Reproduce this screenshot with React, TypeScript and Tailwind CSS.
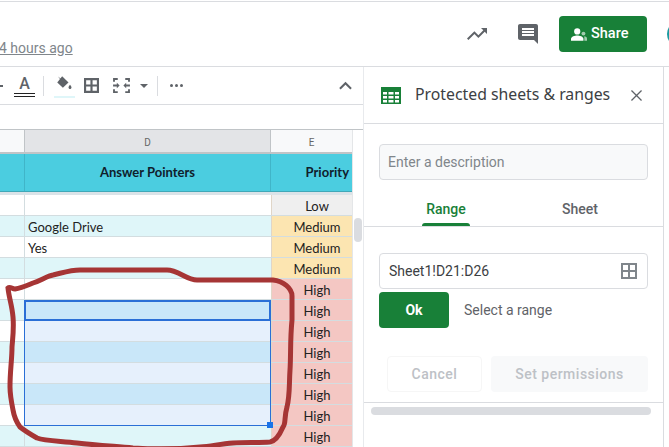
import React from 'react';

const CYAN = 'bg-[#dff6f9]';
const WHITE = 'bg-white';
const LIGHT = 'bg-[#e6f0fc]';
const SKY = 'bg-[#c9e7f9]';

const rows = [
  { left: WHITE, bg: WHITE, text: '', pri: 'Low', priBg: 'bg-[#efefef]' },
  { left: CYAN, bg: CYAN, text: 'Google Drive', pri: 'Medium', priBg: 'bg-[#fce5b1]' },
  { left: WHITE, bg: WHITE, text: 'Yes', pri: 'Medium', priBg: 'bg-[#fce5b1]' },
  { left: CYAN, bg: CYAN, text: '', pri: 'Medium', priBg: 'bg-[#fce5b1]' },
  { left: WHITE, bg: WHITE, text: '', pri: 'High', priBg: 'bg-[#f4c7c3]' },
  { left: CYAN, bg: SKY, text: '', pri: 'High', priBg: 'bg-[#f4c7c3]' },
  { left: WHITE, bg: LIGHT, text: '', pri: 'High', priBg: 'bg-[#f4c7c3]' },
  { left: CYAN, bg: SKY, text: '', pri: 'High', priBg: 'bg-[#f4c7c3]' },
  { left: WHITE, bg: LIGHT, text: '', pri: 'High', priBg: 'bg-[#f4c7c3]' },
  { left: CYAN, bg: SKY, text: '', pri: 'High', priBg: 'bg-[#f4c7c3]' },
  { left: WHITE, bg: LIGHT, text: '', pri: 'High', priBg: 'bg-[#f4c7c3]' },
  { left: CYAN, bg: CYAN, text: '', pri: 'High', priBg: 'bg-[#f4c7c3]' },
];

function Icon({ d, className }: { d: string; className?: string }) {
  return (
    <svg viewBox="0 0 24 24" className={className} fill="currentColor">
      <path d={d} />
    </svg>
  );
}

function Toolbar() {
  return (
    <div className="h-[38px] flex items-center border-b border-[#dadce0] text-[#5f6368] shrink-0">
      <div className="w-[3px] h-[2px] bg-[#5f6368] mt-[1px]" />
      <div className="ml-[11px] w-[21px] flex flex-col items-center pt-[2px]">
        <span className="font-['Roboto',sans-serif] font-medium text-[16px] leading-[16px] text-[#5f6368]">A</span>
        <div className="w-[21px] h-[4px] mt-[1px] border-y border-[#222]" />
      </div>
      <div className="ml-[8px] w-px h-[20px] bg-[#dadce0]" />
      <div className="ml-[9px] w-[22px] flex flex-col items-center pt-[2px]">
        <svg viewBox="0 0 24 24" className="w-[18px] h-[18px]" fill="currentColor">
          <path d="M9.500 1.500 L18 10 L10.500 17 L3 10 Z" />
          <path d="M4 2l5 4-1 1z" />
          <path d="M20 13s-2 2.200-2 3.600c0 1.100.9 2 2 2s2-.9 2-2C22 15.200 20 13 20 13z" />
        </svg>
        <div className="w-[21px] h-[2px] mt-[3px] bg-[#dff6f9]" />
      </div>
      <svg viewBox="0 0 14 14" className="ml-[9px] w-[15px] h-[15px]" fill="none" stroke="currentColor" strokeWidth="2">
        <path d="M1 1h12v12H1zM7 1v12M1 7h12" />
      </svg>
      <svg viewBox="0 0 18 16" className="ml-[14px] w-[17px] h-[15px]" fill="currentColor">
        <path d="M0 0h5v2H2v2H0zM13 0h5v4h-2V2h-3zM0 12h2v2h3v2H0zM16 12h2v4h-5v-2h3zM0 7h4V5l3 3-3 3V9H0zM18 7h-4V5l-3 3 3 3V9h4z" />
      </svg>
      <div className="ml-[10px] w-0 h-0 border-x-[4px] border-x-transparent border-t-[4px] border-t-[#5f6368]" />
      <div className="ml-[9px] w-px h-[20px] bg-[#dadce0]" />
      <div className="ml-[12px] flex gap-[2px]">
        <div className="w-[3px] h-[3px] rounded-full bg-[#5f6368]" />
        <div className="w-[3px] h-[3px] rounded-full bg-[#5f6368]" />
        <div className="w-[3px] h-[3px] rounded-full bg-[#5f6368]" />
      </div>
      <svg viewBox="0 0 14 9" className="ml-auto mr-[11px] w-[13px] h-[9px]" fill="none" stroke="#5f6368" strokeWidth="2.2">
        <path d="M1 8l6-6 6 6" />
      </svg>
    </div>
  );
}

function Grid() {
  return (
    <div className="flex flex-1 min-h-0 font-['Lato',sans-serif] text-[13px] text-[#222]">
      <div className="w-[352px] relative">
        <div className="grid grid-cols-[25px_246px_81px] h-[24px] border-b-2 border-[#c0c4c7] font-['Roboto',sans-serif] text-[10px] text-[#666]">
          <div className="bg-[#f8f9fa] border-r border-[#c0c4c7]" />
          <div className="bg-[#e3e4e7] border-r border-[#c0c4c7] flex items-center justify-center pt-[2px]">D</div>
          <div className="bg-[#f8f9fa] flex items-center justify-center pt-[2px]">E</div>
        </div>
        <div className="grid grid-cols-[25px_246px_81px] h-[37px] bg-[#4bcde0] font-bold text-[#10202c]">
          <div className="border-r border-[#40b5c8]" />
          <div className="border-r border-[#40b5c8] flex items-center justify-center">Answer Pointers</div>
          <div className="flex items-center justify-end pr-[3px]">Priority</div>
        </div>
        <div className="h-[4px] bg-[#dbe3e8] border-t border-[#40a8b8]" />
        <div className="relative">
          {rows.map((r, i) => (
            <div key={i} className="grid grid-cols-[25px_246px_81px] h-[21px] border-b border-[#d3dde0] leading-[16px]">
              <div className={`${r.left} border-r border-[#d3dde0]`} />
              <div className={`${r.bg} px-[3px] pt-[2px] flex items-center`}>{r.text}</div>
              <div className={`${r.priBg} border-l border-[#e0d6c8] flex items-center justify-center pl-[10px] pt-[2px]`}>
                {r.pri}
              </div>
            </div>
          ))}
          <div className="absolute left-[24px] top-[105px] w-[247px] h-[126px] border border-[#2a6fd6]" />
          <div className="absolute left-[24px] top-[105px] w-[247px] h-[21px] border-2 border-[#2a6fd6]" />
          <div className="absolute left-[267px] top-[227px] w-[6px] h-[6px] bg-[#1a73e8]" />
        </div>
      </div>
      <div className="w-[11px] border-l border-[#e4e6e8] bg-white">
        <div className="mt-[88px] mx-auto w-[8px] h-[24px] rounded bg-[#dadce0]" />
      </div>
    </div>
  );
}

function Panel() {
  return (
    <div className="w-[301px] border-l border-l-[#e8eaed] border-r border-r-[#dadce0] flex flex-col font-['Roboto',sans-serif] bg-white">
      <div className="h-[57px] flex items-center border-b border-[#dadce0] shrink-0">
        <svg viewBox="0 0 20 17" className="ml-[17px] w-[20px] h-[17px]" fill="#188038">
          <path d="M0 0h20v17H0z M2 5v2.500h4V5z M7.500 5v2.500h5V5z M14 5v2.500h4V5z M2 9v2.500h4V9z M7.500 9v2.500h5V9z M14 9v2.500h4V9z M2 13v2.500h4V13z M7.500 13v2.500h5V13z M14 13v2.500h4V13z" fillRule="evenodd" />
        </svg>
        <span className="ml-[14px] font-['Noto_Sans',sans-serif] text-[15.8px] text-[#3c4043] whitespace-nowrap">Protected sheets &amp; ranges</span>
        <svg viewBox="0 0 12 12" className="ml-auto mr-[21px] w-[11px] h-[11px]" fill="none" stroke="#5f6368" strokeWidth="1.4">
          <path d="M.5.5l11 11M11.500.5l-11 11" />
        </svg>
      </div>
      <div className="px-[15px] pt-[20px]">
        <div className="h-[36px] w-[269px] border border-[#dadce0] rounded bg-[#f8f9fa] flex items-center px-[8px] text-[14px] text-[#80868b]">
          Enter a description
        </div>
      </div>
      <div className="mt-[17px] h-[30px] border-b border-[#dadce0] flex text-[14px] font-medium shrink-0">
        <div className="ml-[58px] w-[48px] flex flex-col items-center">
          <span className="text-[#188038] leading-[25px]">Range</span>
          <div className="w-[48px] h-[3px] rounded-t bg-[#188038] mt-[1px]" />
        </div>
        <span className="ml-[92px] text-[#5f6368] leading-[25px]">Sheet</span>
      </div>
      <div className="px-[15px] pt-[26px]">
        <div className="h-[36px] w-[269px] border border-[#dadce0] rounded flex items-center pl-[9px] pr-[10px] text-[14px] text-[#3c4043]">
          Sheet1!D21:D26
          <svg viewBox="0 0 16 16" className="ml-auto w-[16px] h-[16px]" fill="none" stroke="#80868b" strokeWidth="2">
            <path d="M1 1h14v14H1zM8 1v14M1 8h14" />
          </svg>
        </div>
        <div className="mt-[3px] flex items-center">
          <div className="w-[70px] h-[36px] rounded bg-[#188038] text-white text-[14px] font-bold flex items-center justify-center">Ok</div>
          <span className="ml-[15px] text-[14px] text-[#5f6368]">Select a range</span>
        </div>
        <div className="mt-[28px] flex text-[14px] font-medium text-[#bdc1c6] tracking-[0.5px]">
          <div className="ml-[8px] w-[95px] h-[36px] border border-[#f6f6f6] rounded flex items-center justify-center">Cancel</div>
          <div className="ml-[9px] w-[157px] h-[36px] bg-[#f8f9fa] rounded flex items-center justify-center">Set permissions</div>
        </div>
      </div>
      <div className="mt-[10px] h-[14px] border-t border-[#dadce0] px-[7px] pt-[4px]">
        <div className="w-[280px] h-[8px] rounded bg-[#dadce0]" />
      </div>
    </div>
  );
}

export default function App() {
  return (
    <div className="relative w-[669px] h-[447px] overflow-hidden bg-white flex flex-col">
      <div className="h-[66px] mt-[1px] border-t border-b border-[#dadce0] flex items-center shrink-0">
        <span className="self-end mb-[7px] -ml-[1px] font-['Roboto',sans-serif] text-[14px] text-[#80868b] underline whitespace-nowrap">
          4 hours ago
        </span>
        <Icon
          className="ml-auto w-[24px] h-[24px] text-[#5f6368]"
          d="M16 6l2.290 2.290-4.880 4.880-4-4L2 16.590 3.410 18l6-6 4 4 6.300-6.290L22 12V6z"
        />
        <Icon
          className="ml-[27px] w-[24px] h-[24px] text-[#5f6368]"
          d="M21.990 4c0-1.100-.89-2-1.990-2H4c-1.100 0-2 .9-2 2v12c0 1.100.9 2 2 2h14l4 4-.01-18zM18 14H6v-2h12v2zm0-3H6V9h12v2zm0-3H6V6h12v2z"
        />
        <div className="ml-[19px] w-[88px] h-[36px] rounded bg-[#188038] text-white flex items-center pl-[12px] font-['Roboto',sans-serif] font-medium text-[14.5px]">
          <svg viewBox="0 0 18 14" className="w-[16px] h-[13px]" fill="currentColor">
            <circle cx="7" cy="3.500" r="3.500" />
            <path d="M0 14v-2c0-2.500 4.500-3.800 7-3.800s7 1.300 7 3.800v2z" />
            <circle cx="14" cy="6" r="2.200" opacity="0.6" />
            <path d="M15 9c1.500.3 3 1 3 2.500V14h-3z" opacity="0.6" />
          </svg>
          <span className="ml-[4px]">Share</span>
        </div>
        <div className="ml-[20px] mr-[-24px] w-[26px] h-[26px] rounded-full border-[3px] border-[#1a9aa0] shrink-0" />
      </div>
      <div className="flex flex-1 min-h-0">
        <div className="w-[363px] flex flex-col shrink-0">
          <Toolbar />
          <div className="h-[25px] border-b border-[#c0c4c7] shrink-0" />
          <Grid />
        </div>
        <Panel />
      </div>
      <svg className="absolute left-0 top-0 pointer-events-none" width="669" height="447" fill="none">
        <path
          d="M8 288 C10 286 12 289 15 289 C22 288 28 285 33 283 C42 280 47 276 53 275 C62 273 70 270 80 270 L167 270 C178 270 187 280 197 280 L273 280 C283 281 292 288 292 296 L292 320 C290 340 291 355 290 370 C289 385 290 395 287 407 C284 417 286 424 283 427 C280 434 276 441 270 442 C258 443 245 442 233 443 C220 444 212 446 200 447 C180 449 150 449 133 448 C110 446 95 445 77 443 C60 441 45 441 37 438 C30 434 25 431 20 427 C15 420 14 416 13 410 C11 400 10 395 10 387 C10 370 12 360 12 347 C13 335 14 328 13 317 C12 305 9 298 8 288 Z"
          stroke="#a63535"
          strokeWidth="5"
        />
      </svg>
    </div>
  );
}
